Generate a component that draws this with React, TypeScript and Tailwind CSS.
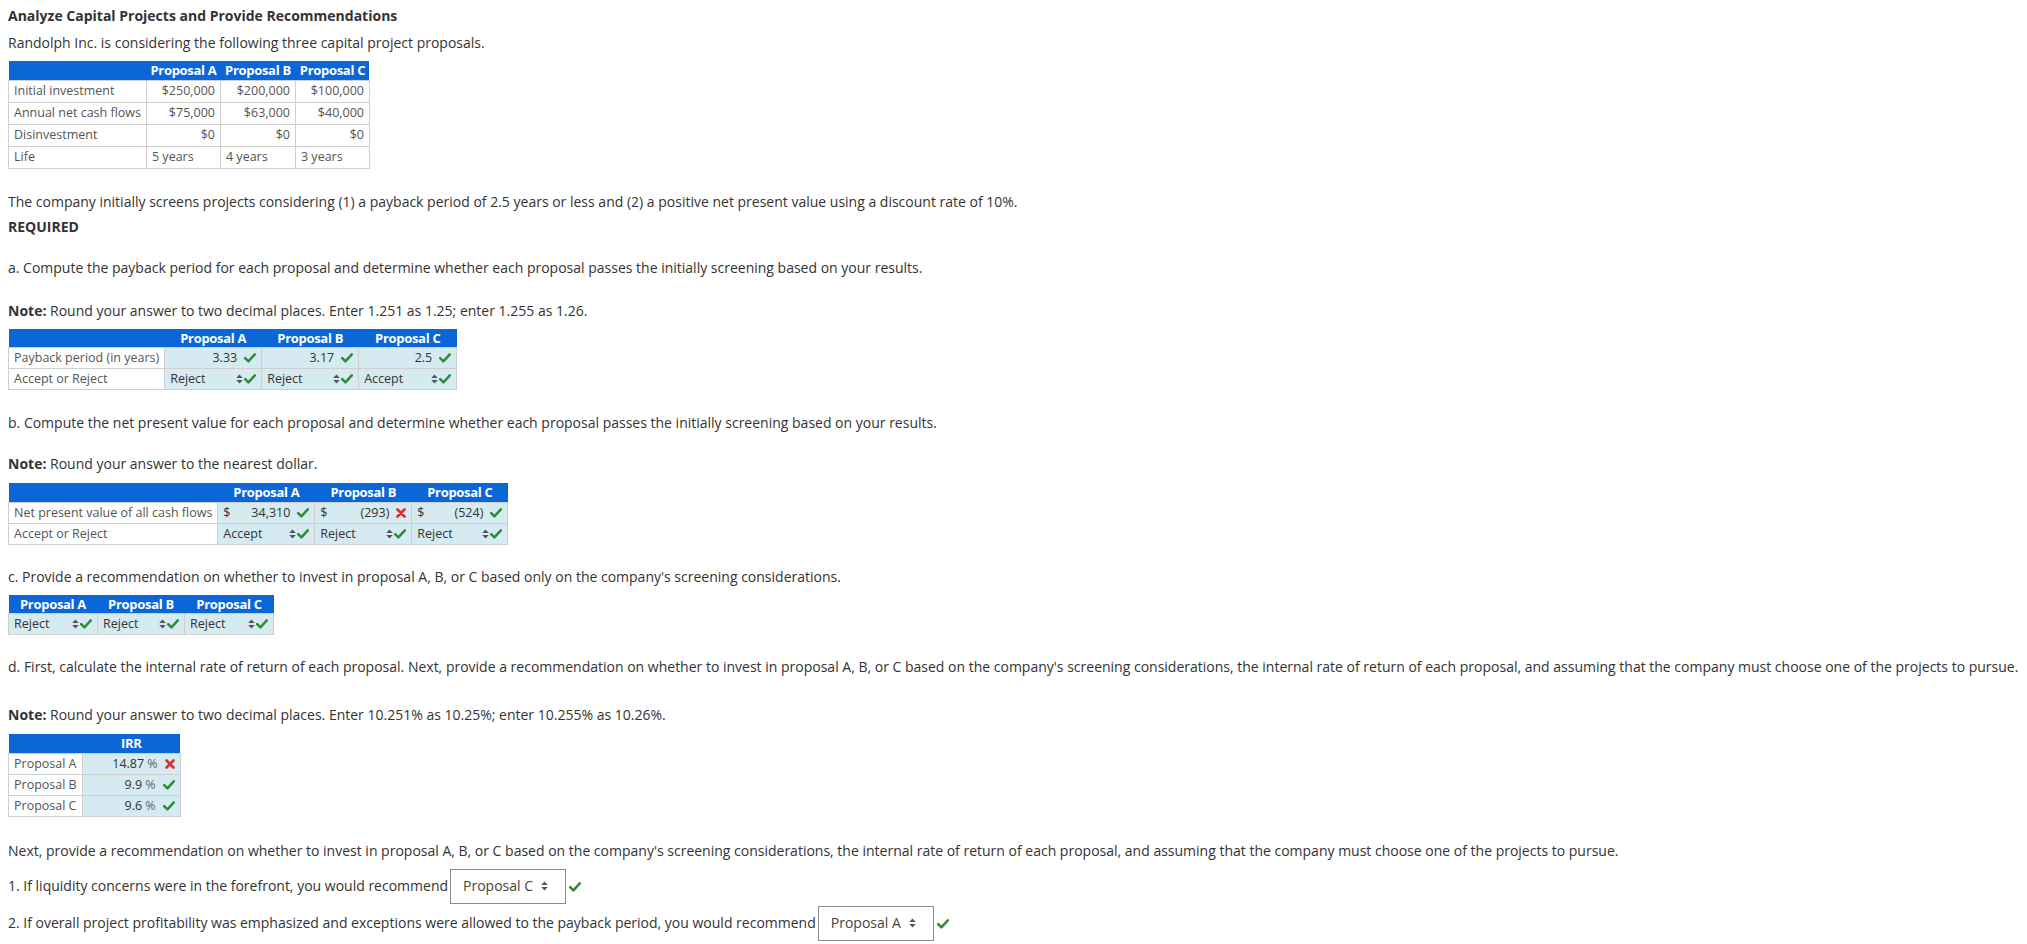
import React from 'react'

function Check() {
  return (
    <svg width="12" height="10" viewBox="0 0 12 10" className="inline-block shrink-0">
      <path d="M1.2 5.2 L4.4 8.4 L10.8 1.4" fill="none" stroke="#2f8a3a" strokeWidth="2.5" strokeLinecap="round" strokeLinejoin="round" />
    </svg>
  )
}

function Cross() {
  return (
    <svg width="10" height="10" viewBox="0 0 10 10" className="inline-block shrink-0">
      <path d="M1.5 1.5 L8.5 8.5 M8.5 1.5 L1.5 8.5" fill="none" stroke="#d9302c" strokeWidth="2.6" strokeLinecap="round" />
    </svg>
  )
}

function Sort() {
  return (
    <svg width="7" height="10" viewBox="0 0 7 10" className="inline-block shrink-0">
      <path d="M3.5 0.5 L6.8 4 L0.2 4 Z M3.5 9.5 L6.8 6 L0.2 6 Z" fill="#555" />
    </svg>
  )
}

const th = 'bg-[#0b66d8] text-white font-bold text-center text-[13px] px-0 leading-[18px] h-[19px] tracking-[-0.3px] whitespace-nowrap'
const lbl = 'border border-[#cfcfcf] bg-white text-[#555] text-[12.5px] px-[5px] h-[21px] whitespace-nowrap'
const ans = 'border border-[#cfcfcf] bg-[#d6eaf1] text-[#333] text-[12.5px] px-[5px] h-[21px] whitespace-nowrap'

function NumAns({ v, ok = true }: { v: string; ok?: boolean }) {
  return (
    <td className={ans}>
      <div className="flex items-center justify-end gap-[7px]">
        <span>{v}</span>
        {ok ? <Check /> : <Cross />}
      </div>
    </td>
  )
}

function PickAns({ v }: { v: string }) {
  return (
    <td className={ans}>
      <div className="flex items-center justify-between">
        <span>{v}</span>
        <span className="flex items-center gap-[1px]">
          <Sort />
          <Check />
        </span>
      </div>
    </td>
  )
}

function DollarAns({ v, ok = true }: { v: string; ok?: boolean }) {
  return (
    <td className={ans}>
      <div className="flex items-center justify-between">
        <span>$</span>
        <span className="flex items-center gap-[7px]">
          <span>{v}</span>
          {ok ? <Check /> : <Cross />}
        </span>
      </div>
    </td>
  )
}

function Select({ v }: { v: string }) {
  return (
    <div className="h-[35px] w-[116px] border border-[#8c8c8c] bg-white flex items-center gap-[8px] pl-[12px] text-[14px] text-[#444]">
      <span>{v}</span>
      <Sort />
    </div>
  )
}

export default function App() {
  const given = [
    ['Initial investment', '$250,000', '$200,000', '$100,000'],
    ['Annual net cash flows', '$75,000', '$63,000', '$40,000'],
    ['Disinvestment', '$0', '$0', '$0'],
  ]

  return (
    <div className="min-h-[944px] bg-white pl-[8px] pt-[6px] font-['Open_Sans',sans-serif] text-[14px] leading-[20px] text-[#333]">
      <h1 className="font-bold text-[14px] leading-[20px] text-[#333]">Analyze Capital Projects and Provide Recommendations</h1>
      <p className="mt-[7px]">Randolph Inc. is considering the following three capital project proposals.</p>

      <table className="mt-[8px] border-collapse">
        <thead>
          <tr>
            <th className={`${th} w-[137px]`}></th>
            <th className={`${th} w-[74px]`}>Proposal A</th>
            <th className={`${th} w-[75px]`}>Proposal B</th>
            <th className={`${th} w-[74px]`}>Proposal C</th>
          </tr>
        </thead>
        <tbody>
          {given.map(r => (
            <tr key={r[0]}>
              <td className={`${lbl} h-[22px]`}>{r[0]}</td>
              {r.slice(1).map((c, i) => (
                <td key={i} className={`${lbl} h-[22px] text-right`}>{c}</td>
              ))}
            </tr>
          ))}
          <tr>
            <td className={`${lbl} h-[22px]`}>Life</td>
            <td className={`${lbl} h-[22px]`}>5 years</td>
            <td className={`${lbl} h-[22px]`}>4 years</td>
            <td className={`${lbl} h-[22px]`}>3 years</td>
          </tr>
        </tbody>
      </table>

      <p className="mt-[23px]">The company initially screens projects considering (1) a payback period of 2.5 years or less and (2) a positive net present value using a discount rate of 10%.</p>
      <p className="mt-[5px] font-bold">REQUIRED</p>

      <p className="mt-[21px]">a. Compute the payback period for each proposal and determine whether each proposal passes the initially screening based on your results.</p>
      <p className="mt-[23px]"><span className="font-bold">Note:</span> Round your answer to two decimal places. Enter 1.251 as 1.25; enter 1.255 as 1.26.</p>

      <table className="mt-[8px] border-collapse">
        <thead>
          <tr>
            <th className={`${th} w-[155px]`}></th>
            <th className={`${th} w-[97px]`}>Proposal A</th>
            <th className={`${th} w-[97px]`}>Proposal B</th>
            <th className={`${th} w-[98px]`}>Proposal C</th>
          </tr>
        </thead>
        <tbody>
          <tr>
            <td className={lbl}>Payback period (in years)</td>
            <NumAns v="3.33" />
            <NumAns v="3.17" />
            <NumAns v="2.5" />
          </tr>
          <tr>
            <td className={lbl}>Accept or Reject</td>
            <PickAns v="Reject" />
            <PickAns v="Reject" />
            <PickAns v="Accept" />
          </tr>
        </tbody>
      </table>

      <p className="mt-[23px]">b. Compute the net present value for each proposal and determine whether each proposal passes the initially screening based on your results.</p>
      <p className="mt-[21px]"><span className="font-bold">Note:</span> Round your answer to the nearest dollar.</p>

      <table className="mt-[9px] border-collapse">
        <thead>
          <tr>
            <th className={`${th} w-[209px]`}></th>
            <th className={`${th} w-[97px]`}>Proposal A</th>
            <th className={`${th} w-[97px]`}>Proposal B</th>
            <th className={`${th} w-[96px]`}>Proposal C</th>
          </tr>
        </thead>
        <tbody>
          <tr>
            <td className={lbl}>Net present value of all cash flows</td>
            <DollarAns v="34,310" />
            <DollarAns v="(293)" ok={false} />
            <DollarAns v="(524)" />
          </tr>
          <tr>
            <td className={lbl}>Accept or Reject</td>
            <PickAns v="Accept" />
            <PickAns v="Reject" />
            <PickAns v="Reject" />
          </tr>
        </tbody>
      </table>

      <p className="mt-[22px]">c. Provide a recommendation on whether to invest in proposal A, B, or C based only on the company's screening considerations.</p>

      <table className="mt-[8px] border-collapse">
        <thead>
          <tr>
            <th className={`${th} w-[89px]`}>Proposal A</th>
            <th className={`${th} w-[87px]`}>Proposal B</th>
            <th className={`${th} w-[89px]`}>Proposal C</th>
          </tr>
        </thead>
        <tbody>
          <tr>
            <PickAns v="Reject" />
            <PickAns v="Reject" />
            <PickAns v="Reject" />
          </tr>
        </tbody>
      </table>

      <p className="mt-[22px] whitespace-nowrap">d. First, calculate the internal rate of return of each proposal. Next, provide a recommendation on whether to invest in proposal A, B, or C based on the company's screening considerations, the internal rate of return of each proposal, and assuming that the company must choose one of the projects to pursue.</p>
      <p className="mt-[28px]"><span className="font-bold">Note:</span> Round your answer to two decimal places. Enter 10.251% as 10.25%; enter 10.255% as 10.26%.</p>

      <table className="mt-[9px] border-collapse">
        <thead>
          <tr>
            <th className={`${th} w-[73px]`}></th>
            <th className={`${th} w-[98px]`}>IRR</th>
          </tr>
        </thead>
        <tbody>
          {[
            ['Proposal A', '14.87', false],
            ['Proposal B', '9.9', true],
            ['Proposal C', '9.6', true],
          ].map(([n, v, ok]) => (
            <tr key={n as string}>
              <td className={lbl}>{n}</td>
              <td className={ans}>
                <div className="flex items-center justify-end gap-[7px]">
                  <span>{v} <span className="text-[#666]">%</span></span>
                  {ok ? <Check /> : <Cross />}
                </div>
              </td>
            </tr>
          ))}
        </tbody>
      </table>

      <p className="mt-[24px]">Next, provide a recommendation on whether to invest in proposal A, B, or C based on the company's screening considerations, the internal rate of return of each proposal, and assuming that the company must choose one of the projects to pursue.</p>

      <div className="mt-[8px] flex items-center">
        <span>1. If liquidity concerns were in the forefront, you would recommend</span>
        <span className="ml-[2px]"><Select v="Proposal C" /></span>
        <span className="ml-[3px]"><Check /></span>
      </div>
      <div className="mt-[2px] flex items-center">
        <span>2. If overall project profitability was emphasized and exceptions were allowed to the payback period, you would recommend</span>
        <span className="ml-[2px]"><Select v="Proposal A" /></span>
        <span className="ml-[3px]"><Check /></span>
      </div>
    </div>
  )
}
